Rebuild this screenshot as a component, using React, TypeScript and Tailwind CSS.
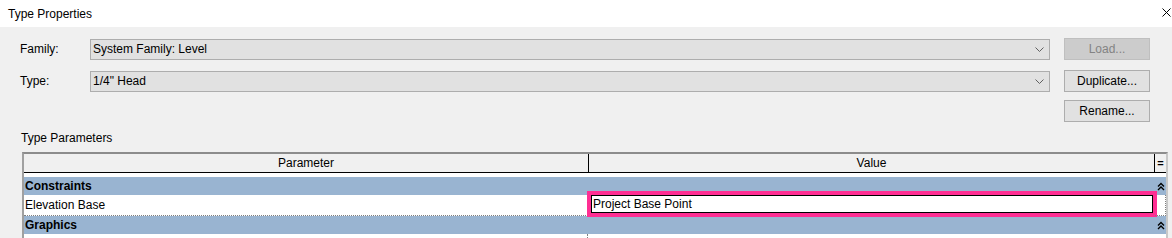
import React from "react";

const Chevron = () => (
  <svg width="9" height="5" viewBox="0 0 9 5" className="shrink-0">
    <path d="M0.5 0.5 L4.5 4.5 L8.5 0.5" fill="none" stroke="#606060" strokeWidth="1" />
  </svg>
);

const DoubleUp = () => (
  <svg width="8" height="9" viewBox="0 0 8 9" className="shrink-0">
    <path d="M1 4.5 L4 1.5 L7 4.5 M1 8 L4 5 L7 8" fill="none" stroke="#000" strokeWidth="1.4" />
  </svg>
);

function Dropdown({ text }: { text: string }) {
  return (
    <div className="w-[960px] h-[21px] border border-[#adadad] bg-[#e1e1e1] flex items-center justify-between pl-[2px] pr-[5px]">
      <span>{text}</span>
      <Chevron />
    </div>
  );
}

function Btn({ text, disabled }: { text: string; disabled?: boolean }) {
  return (
    <div
      className={
        disabled
          ? "w-[86px] h-[22px] ml-[14px] border border-[#bfbfbf] bg-[#cccccc] text-[#838383] flex items-center justify-center"
          : "w-[86px] h-[22px] ml-[14px] border border-[#adadad] bg-[#e1e1e1] flex items-center justify-center"
      }
    >
      {text}
    </div>
  );
}

export default function App() {
  return (
    <div className="w-[1172px] h-[238px] overflow-hidden bg-[#f0f0f0] text-[12px] leading-none text-black font-['Liberation_Sans',Arial,sans-serif]">
      <div className="h-[27px] bg-white flex items-center justify-between pl-[8px] pr-[1px]">
        <span>Type Properties</span>
        <svg width="9" height="9" viewBox="0 0 9 9" className="mt-[-2px]">
          <path d="M0.5 0.5 L8.5 8.5 M8.5 0.5 L0.5 8.5" stroke="#000" strokeWidth="1" />
        </svg>
      </div>

      <div className="pl-[20px] pt-[11px]">
        <div className="flex items-center">
          <span className="w-[70px]">Family:</span>
          <Dropdown text="System Family: Level" />
          <Btn text="Load..." disabled />
        </div>
        <div className="flex items-center mt-[10px]">
          <span className="w-[70px]">Type:</span>
          <Dropdown text={"1/4\" Head"} />
          <Btn text="Duplicate..." />
        </div>
        <div className="flex items-center mt-[8px] pl-[1030px]">
          <Btn text="Rename..." />
        </div>

        <div className="mt-[9px] h-[14px] flex items-center pl-[1px]">Type Parameters</div>

        <div className="mt-[7px] ml-[2px] w-[1146px] border-l-2 border-t-2 border-r-2 border-l-[#a0a0a0] border-t-[#8c8c8c] border-r-[#c8c8c8] bg-white h-[200px]">
          {/* header */}
          <div className="flex h-[19px] bg-[#f0f0f0] border-b border-black">
            <div className="w-[565px] border-r border-black flex items-center justify-center">Parameter</div>
            <div className="w-[566px] border-r border-black flex items-center justify-center">Value</div>
            <div className="flex-1 flex items-center justify-center font-bold text-[11px]">=</div>
          </div>
          <div className="h-[4px]" />
          {/* Constraints */}
          <div className="h-[18px] bg-[#99b4d1] flex items-center">
            <span className="pl-[1px] font-bold w-[1131px]">Constraints</span>
            <div className="flex-1 flex justify-center">
              <DoubleUp />
            </div>
          </div>
          {/* Elevation base */}
          <div className="h-[21px] flex">
            <div className="w-[564px] border-b border-dotted border-[#808080] flex items-center pl-[1px]">
              Elevation Base
            </div>
            <div className="ml-[3px] w-[562px] h-[18px] border border-black outline-4 outline-solid outline-[#ff2e93] flex items-center pl-[1px] bg-white">
              Project Base Point
            </div>
            <div className="ml-[2px] flex-1 border-b border-r border-dotted border-[#808080]" />
          </div>
          {/* Graphics */}
          <div className="h-[18px] bg-[#99b4d1] flex items-center">
            <span className="pl-[1px] font-bold w-[1131px]">Graphics</span>
            <div className="flex-1 flex justify-center">
              <DoubleUp />
            </div>
          </div>
          <div className="h-[20px] flex">
            <div className="w-[564px] border-r border-dotted border-[#808080]" />
          </div>
        </div>
      </div>
    </div>
  );
}
